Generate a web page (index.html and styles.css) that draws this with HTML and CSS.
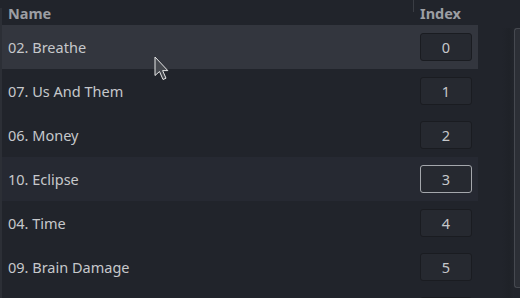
FILE: index.html
```html
<!DOCTYPE html>
<html>
<head>
<meta charset="utf-8">
<link rel="stylesheet" href="styles.css">
</head>
<body>
<div class="frame">
  <div class="tree">
    <div class="header">
      <div class="col-name">Name</div>
      <div class="col-index"><span class="sep"></span>Index</div>
    </div>
    <div class="row hover"><div class="name">02. Breathe</div><div class="idx"><span class="box">0</span></div></div>
    <div class="row"><div class="name">07. Us And Them</div><div class="idx"><span class="box">1</span></div></div>
    <div class="row"><div class="name">06. Money</div><div class="idx"><span class="box">2</span></div></div>
    <div class="row alt"><div class="name">10. Eclipse</div><div class="idx"><span class="box focus">3</span></div></div>
    <div class="row"><div class="name">04. Time</div><div class="idx"><span class="box">4</span></div></div>
    <div class="row"><div class="name">09. Brain Damage</div><div class="idx"><span class="box">5</span></div></div>
    <div class="row"><div class="name">&nbsp;</div><div class="idx"><span class="box">&nbsp;</span></div></div>
  </div>
  <div class="side">
    <div class="track"></div>
    <div class="grab"></div>
  </div>
  <svg class="cursor" width="16" height="26" viewBox="0 0 16 26">
    <path d="M1 1 L1 19.5 L5.5 15.5 L9 23.5 L12 22.2 L8.6 14.6 L13.8 14.6 Z" fill="#45484e" stroke="#e6e6e6" stroke-width="1"/>
  </svg>
</div>
</body>
</html>
```
FILE: styles.css
```css
html, body {
  margin: 0;
  padding: 0;
  background: #21242b;
  overflow: hidden;
}
.frame {
  position: relative;
  width: 520px;
  height: 298px;
  display: flex;
  overflow: hidden;
  font-family: "Noto Sans", "DejaVu Sans", sans-serif;
}
.frame::before {
  content: "";
  position: absolute;
  left: 0;
  top: 8px;
  bottom: 0;
  width: 2px;
  background: #2c2f36;
}
.tree {
  width: 476px;
  margin-left: 2px;
  display: flex;
  flex-direction: column;
  flex: none;
}
.header {
  height: 25px;
  display: flex;
  align-items: center;
  flex: none;
  color: #9c9ea3;
  font-weight: bold;
  font-size: 14.5px;
}
.col-name {
  flex: 1;
  padding-left: 6px;
}
.col-index {
  width: 65px;
  display: flex;
  align-items: center;
  position: relative;
  padding-left: 7px;
  box-sizing: border-box;
}
.sep {
  position: absolute;
  left: 0;
  top: -7px;
  width: 1px;
  height: 16px;
  background: #3a3d44;
}
.row {
  height: 44px;
  flex: none;
  display: flex;
  align-items: center;
  color: #c6c8cb;
  font-size: 14.5px;
}
.row.hover {
  background: #33363e;
}
.row.alt {
  background: #262932;
}
.name {
  flex: 1;
  padding-left: 6px;
}
.idx {
  width: 65px;
  padding-left: 7px;
  box-sizing: border-box;
}
.box {
  display: flex;
  align-items: center;
  justify-content: center;
  width: 52px;
  height: 28px;
  box-sizing: border-box;
  background: #262930;
  border: 1px solid #1a1c21;
  border-radius: 3px;
}
.box.focus {
  border-color: #a4a7ac;
}
.side {
  flex: 1;
  display: flex;
  justify-content: flex-end;
  padding-top: 28px;
}
.track {
  width: 12px;
  background: linear-gradient(90deg, #21242b, #1f2228 60%, #22252c);
}
.grab {
  width: 6px;
  height: 260px;
  box-sizing: border-box;
  background: #2c2f36;
  border: 1px solid #464950;
  border-right: none;
  border-radius: 3px 0 0 3px;
}
.cursor {
  position: absolute;
  left: 154px;
  top: 56px;
}
```
